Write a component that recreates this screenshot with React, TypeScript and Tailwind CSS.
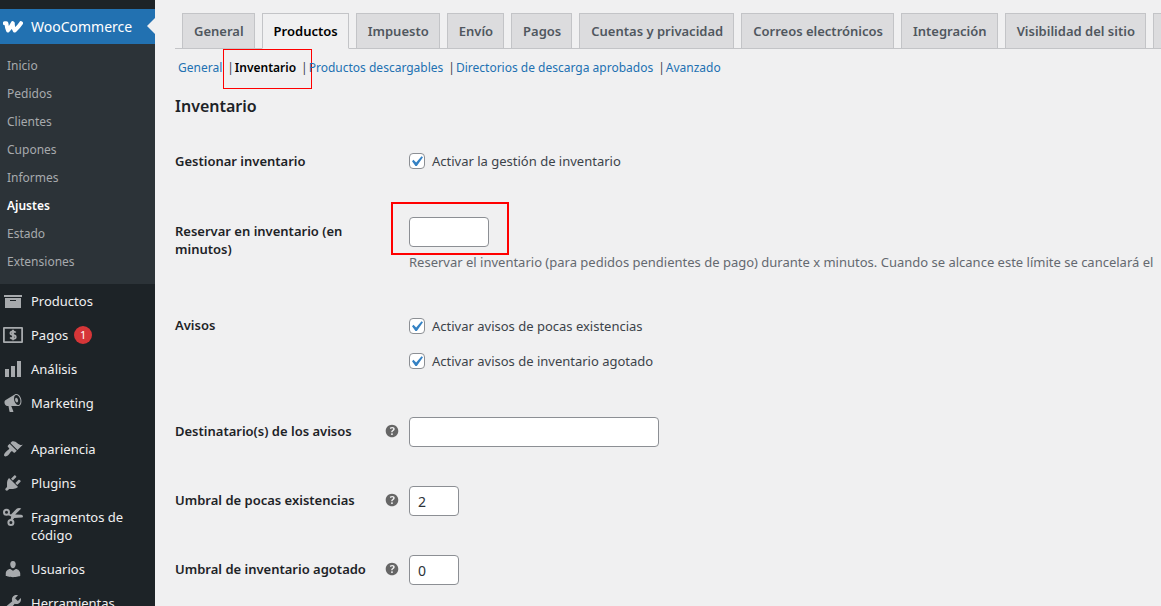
import React from "react";

type IconProps = {
	className?: string;
	children: React.ReactNode;
};

const Icon = ({ className = "size-5", children }: IconProps) => (
	<svg viewBox="0 0 20 20" fill="currentColor" aria-hidden="true" className={`shrink-0 ${className}`}>
		{children}
	</svg>
);

const icons = {
	archive: <path d="M19 4v2H1V4h18zM2 7h16v10H2V7zm11 3V9H7v1h6z" />,
	payments: (
		<>
			<path fillRule="evenodd" d="M1 2h18a1 1 0 0 1 1 1v14a1 1 0 0 1-1 1H1a1 1 0 0 1-1-1V3a1 1 0 0 1 1-1zm.8 1.800v12.400h16.400V3.800z" />
			<path
				d="M12.600 7.600c-.6-.9-1.500-1.200-2.600-1.200-1.500 0-2.500.7-2.500 1.800 0 2.500 5.200 1.100 5.200 3.700 0 1.100-1.100 1.800-2.600 1.800-1.200 0-2.200-.4-2.800-1.300M10 4.800v10.400"
				fill="none"
				stroke="currentColor"
				strokeWidth="1.900"
			/>
		</>
	),
	chart: <path d="M18 18V2h-4v16h4zm-6 0V7H8v11h4zm-6 0v-8H2v8h4z" />,
	megaphone: (
		<path d="M18.15 5.94c.46 1.62.38 3.22-.02 4.48-.42 1.28-1.26 2.18-2.3 2.48-.16.06-.26.06-.4.06-.06.02-.12.02-.18.02-.06.02-.14.02-.22.02h-6.8l2.22 5.5c.02.14-.06.26-.14.34-.08.1-.24.16-.34.16H6.95c-.1 0-.26-.06-.34-.16-.08-.08-.16-.2-.14-.34l-1-5.5H4.25l-.02-.02c-.5.06-1.08-.18-1.54-.62s-.88-1.08-1.06-1.88c-.24-.8-.2-1.56-.02-2.2.18-.62.58-1.08 1.06-1.3l.02-.02 9-5.4c.1-.06.18-.1.24-.16.06-.04.14-.08.24-.12.16-.08.28-.12.5-.18 1.04-.3 2.24.1 3.22.98s1.84 2.24 2.26 3.86zm-2.58 5.98h-.02c.4-.1.74-.34 1.04-.7.58-.7.86-1.76.86-3.04 0-.64-.1-1.3-.28-1.98-.34-1.36-1.02-2.5-1.78-3.24s-1.68-1.1-2.46-.88c-.82.22-1.4.96-1.7 2-.32 1.04-.28 2.36.06 3.72.38 1.36 1 2.5 1.8 3.24.78.74 1.62 1.1 2.48.88zm-2.54-7.08c.22-.04.42-.02.62.04.38.16.76.48 1.02 1s.42 1.2.42 1.78c0 .3-.04.56-.12.8-.18.48-.44.84-.86.94-.34.1-.8-.06-1.14-.4s-.64-.86-.78-1.5c-.18-.62-.12-1.24.02-1.72s.48-.84.82-.94z" />
	),
	brush: (
		<path d="M14.48 11.06L7.41 3.99l1.5-1.5c.5-.56 2.3-.47 3.51.32 1.21.8 1.43 1.28 2.91 2.1 1.18.64 2.45 1.26 4.45.85zm-.71.71L6.7 4.7 4.93 6.47c-.39.39-.39 1.02 0 1.41l1.06 1.06c.39.39.39 1.03 0 1.42-.6.6-1.43 1.11-2.21 1.69-.35.26-.7.53-1.01.84C1.43 14.23.4 16.08 1.4 17.07c.99 1 2.84-.03 4.18-1.36.31-.31.58-.66.85-1.02.57-.78 1.08-1.61 1.69-2.21.39-.39 1.02-.39 1.41 0l1.06 1.06c.39.39 1.02.39 1.41 0z" />
	),
	plug: (
		<path d="M13.11 4.36L9.87 7.6 8 5.73l3.24-3.24c.35-.34 1.05-.2 1.56.32.52.51.66 1.21.31 1.55zm-8 1.77l.91-1.12 9.01 9.01-1.19.84c-.71.71-2.63 1.16-3.82 1.16H6.14L4.9 17.26c-.59.59-1.54.59-2.12 0-.59-.58-.59-1.53 0-2.12l1.24-1.24v-3.88c0-1.13.4-3.19 1.09-3.89zm7.26 3.97l3.24-3.24c.34-.35 1.04-.21 1.55.31.52.51.66 1.21.31 1.55l-3.24 3.25z" />
	),
	scissors: (
		<>
			<g fill="none" stroke="currentColor" strokeWidth="2">
				<circle cx="3.500" cy="5.200" r="2.500" />
				<circle cx="7.900" cy="15.400" r="2.500" />
			</g>
			<path d="M5.200 6.200 8 7.500 13.600 1.700c1-1 3.500-1 4.700-.3L12.200 7.500l6 .2c1 .1 1.800.9 1.800 1.900 0 .6-.4.900-1 .9l-7.700.5-2.100 2.800-1.800-.9.800-3.400-3.800-1.700z" />
		</>
	),
	user: (
		<path d="M10 9.25c-2.27 0-2.73-3.44-2.73-3.44C7 4.02 7.82 2 9.97 2c2.16 0 2.98 2.02 2.71 3.81 0 0-.41 3.44-2.68 3.44zm0 2.57L12.72 10c2.39 0 4.52 2.33 4.52 4.53v2.49s-3.65 1.13-7.24 1.13c-3.65 0-7.24-1.13-7.24-1.13v-2.49c0-2.25 1.94-4.48 4.47-4.48z" />
	),
	wrench: (
		<path d="M16.68 9.77c-1.34 1.34-3.3 1.67-4.95.99l-5.41 6.52c-.99.99-2.59.99-3.58 0s-.99-2.59 0-3.57l6.52-5.42c-.68-1.65-.35-3.61.99-4.95 1.28-1.28 3.12-1.62 4.72-1.06l-2.89 2.89 2.82 2.82 2.86-2.87c.53 1.58.18 3.39-1.08 4.65zM3.81 16.21c.4.39 1.04.39 1.43 0 .4-.4.4-1.04 0-1.43-.39-.4-1.03-.4-1.43 0-.39.39-.39 1.03 0 1.43z" />
	),
	help: (
		<path d="M17 10c0-3.87-3.14-7-7-7-3.87 0-7 3.13-7 7s3.13 7 7 7c3.86 0 7-3.13 7-7zm-6.3 1.48H9.14v-.43c0-.38.08-.7.24-.98s.46-.57.88-.89c.41-.29.68-.53.81-.71.14-.18.2-.39.2-.62 0-.25-.09-.44-.28-.58-.19-.13-.45-.19-.79-.19-.58 0-1.25.19-2 .57l-.64-1.28c.87-.49 1.8-.74 2.77-.74.81 0 1.45.2 1.92.58.48.39.71.91.71 1.55 0 .43-.09.8-.29 1.11-.19.32-.57.67-1.11 1.06-.38.28-.61.49-.71.63-.1.15-.15.34-.15.57v.35zm-1.47 2.74c-.18-.17-.27-.42-.27-.73 0-.33.08-.58.26-.75s.43-.25.77-.25c.32 0 .57.09.75.26s.27.42.27.74c0 .3-.09.55-.27.72-.18.18-.43.27-.75.27-.33 0-.58-.09-.76-.26z" />
	),
};

const submenu = ["Inicio", "Pedidos", "Clientes", "Cupones", "Informes", "Ajustes", "Estado", "Extensiones"];

const storeMenu = [
	{ label: "Productos", icon: icons.archive },
	{ label: "Pagos", icon: icons.payments, count: 1 },
	{ label: "Análisis", icon: icons.chart },
	{ label: "Marketing", icon: icons.megaphone },
];

const siteMenu = [
	{ label: "Apariencia", icon: icons.brush },
	{ label: "Plugins", icon: icons.plug },
	{ label: "Fragmentos de código", icon: icons.scissors },
	{ label: "Usuarios", icon: icons.user },
	{ label: "Herramientas", icon: icons.wrench },
];

const tabs = [
	"General",
	"Productos",
	"Impuesto",
	"Envío",
	"Pagos",
	"Cuentas y privacidad",
	"Correos electrónicos",
	"Integración",
	"Visibilidad del sitio",
];

const sections = ["General", "Inventario", "Productos descargables", "Directorios de descarga aprobados", "Avanzado"];

type MenuItemProps = {
	label: string;
	icon: React.ReactNode;
	count?: number;
};

const MenuItem = ({ label, icon, count }: MenuItemProps) => (
	<li>
		<a href="#" className="flex gap-2 py-2 pl-[3px] pr-5 text-[13px] leading-[18px] text-[#f0f0f1]">
			<Icon className="-my-px size-5 text-[#a7aaad]">{icon}</Icon>
			<span>{label}</span>
			{count && (
				<span className="-ml-[2px] flex size-[18px] items-center justify-center rounded-full bg-[#d63638] text-[11px] text-white">
					{count}
				</span>
			)}
		</a>
	</li>
);

const Sidebar = () => (
	<nav className="w-[155px] shrink-0 bg-[#1d2327] pt-[9px]">
		<a href="#" className="relative flex h-[35px] items-center gap-2 bg-[#2271b1] pl-[3px] text-sm text-white">
			<svg viewBox="0 0 20 12" className="h-3 w-5 shrink-0" fill="none" stroke="currentColor" aria-hidden="true">
				<path
					d="M1.800 2.200h1.600c.3 3 .6 5.200 1.600 7.200C7.100 7.400 8.500 4.800 9.800 2.200c-.2 3 .3 5.200 1.900 7.200C13.900 7.400 16.300 5 18 2.200"
					strokeWidth="4"
					strokeLinecap="round"
					strokeLinejoin="round"
				/>
			</svg>
			WooCommerce
			<span className="absolute right-0 top-[9px] border-y-8 border-r-8 border-y-transparent border-r-[#f0f0f1]" />
		</a>
		<ul className="bg-[#2c3338] py-2">
			{submenu.map((item) => (
				<li key={item}>
					<a
						href="#"
						className={
							item === "Ajustes"
								? "block px-[7px] py-[5px] text-xs font-semibold leading-[18px] text-white"
								: "block px-[7px] py-[5px] text-xs leading-[18px] text-[#a7aaad]"
						}
					>
						{item}
					</a>
				</li>
			))}
		</ul>
		<ul>
			{storeMenu.map((item) => (
				<MenuItem key={item.label} {...item} />
			))}
		</ul>
		<ul className="mt-3">
			{siteMenu.map((item) => (
				<MenuItem key={item.label} {...item} />
			))}
		</ul>
	</nav>
);

type CheckboxProps = {
	id: string;
	label: string;
};

const Checkbox = ({ id, label }: CheckboxProps) => (
	<label htmlFor={id} className="flex items-center gap-[7px] leading-5">
		<span className="grid size-4 shrink-0">
			<input
				id={id}
				type="checkbox"
				defaultChecked
				className="peer col-start-1 row-start-1 size-4 appearance-none rounded border border-[#8c8f94] bg-white"
			/>
			<svg
				viewBox="2.9 1.9 15.2 15.2"
				aria-hidden="true"
				className="pointer-events-none invisible col-start-1 row-start-1 size-4 fill-[#3582c4] peer-checked:visible"
			>
				<path d="M14.83 4.89l1.34.94-5.81 8.38H9.02L5.78 9.67l1.34-1.25 2.57 2.4z" />
			</svg>
		</span>
		{label}
	</label>
);

type FieldRowProps = {
	label: string;
	htmlFor?: string;
	help?: boolean;
	children: React.ReactNode;
};

const FieldRow = ({ label, htmlFor, help, children }: FieldRowProps) => (
	<div className="grid grid-cols-[234px_1fr]">
		<div className="flex justify-between pr-2 pt-5 font-semibold leading-[18px] text-[#1d2327]">
			<label htmlFor={htmlFor} className="w-48 whitespace-normal">
				{label}
			</label>
			{help && (
				<button type="button" aria-label="Ayuda" className="size-[18px] text-[#666]">
					<Icon className="size-[18px]">{icons.help}</Icon>
				</button>
			)}
		</div>
		<div className="pb-6 pt-[15px]">{children}</div>
	</div>
);

const inputStyle = "block h-[30px] rounded border border-[#8c8f94] bg-white px-2 text-sm text-[#2c3338]";

const App = () => {
	return (
		<div className="flex h-screen overflow-hidden bg-[#f0f0f1] font-['Noto_Sans',sans-serif] text-[13px] text-[#3c434a]">
			<Sidebar />
			<main className="min-w-0 flex-1 overflow-hidden whitespace-nowrap pl-5 pt-[13px]">
				<nav className="flex gap-[7px] border-b border-[#c3c4c7] pl-[7px]">
					{tabs.map((tab) => (
						<a
							key={tab}
							href="#"
							className={
								tab === "Productos"
									? "-mb-px shrink-0 border border-b-[#f0f0f1] border-[#c3c4c7] bg-[#f0f0f1] py-[5px] pl-[11px] pr-[10px] font-semibold leading-6 text-black"
									: "shrink-0 border border-b-0 border-[#c3c4c7] bg-[#dcdcde] py-[5px] pl-[11px] pr-[10px] font-semibold leading-6 text-[#50575e]"
							}
						>
							{tab}
						</a>
					))}
					<a
						href="#"
						aria-label="Más ajustes"
						className="w-20 shrink-0 border border-b-0 border-[#c3c4c7] bg-[#dcdcde]"
					/>
				</nav>

				<ul className="flex gap-[5px] pl-[3px] pt-[10px] text-xs leading-[18px]">
					{sections.map((section, i) => (
						<li key={section} className="relative flex gap-px">
							{i > 0 && <span>|</span>}
							<a href="#" className={section === "Inventario" ? "font-semibold text-black" : "text-[#2271b1]"}>
								{section}
							</a>
							{section === "Inventario" && (
								<span className="pointer-events-none absolute -bottom-3 -left-1 -right-4 -top-[10px] border border-[#f00]" />
							)}
						</li>
					))}
				</ul>

				<form>
					<h2 className="pb-[14px] pt-[17px] text-base font-semibold leading-6 text-[#1d2327]">Inventario</h2>

					<FieldRow label="Gestionar inventario" htmlFor="manage">
						<div className="pb-[7px] pt-1">
							<Checkbox id="manage" label="Activar la gestión de inventario" />
						</div>
					</FieldRow>

					<FieldRow label="Reservar en inventario (en minutos)" htmlFor="hold">
						<div className="relative w-20">
							<input id="hold" type="text" className={`${inputStyle} w-20`} />
							<span className="pointer-events-none absolute -bottom-2 -left-[18px] -right-5 -top-[15px] border-2 border-[#f00]" />
						</div>
						<p className="pt-[5px] leading-5 text-[#646970]">
							Reservar el inventario (para pedidos pendientes de pago) durante x minutos. Cuando se alcance este límite se cancelará el
						</p>
					</FieldRow>

					<FieldRow label="Avisos">
						<div className="flex flex-col gap-[15px] pb-[7px] pt-[5px]">
							<Checkbox id="low" label="Activar avisos de pocas existencias" />
							<Checkbox id="out" label="Activar avisos de inventario agotado" />
						</div>
					</FieldRow>

					<FieldRow label="Destinatario(s) de los avisos" htmlFor="recipients" help>
						<input id="recipients" type="text" className={`${inputStyle} w-[250px]`} />
					</FieldRow>

					<FieldRow label="Umbral de pocas existencias" htmlFor="low-threshold" help>
						<input id="low-threshold" type="text" defaultValue="2" className={`${inputStyle} w-[50px]`} />
					</FieldRow>

					<FieldRow label="Umbral de inventario agotado" htmlFor="out-threshold" help>
						<input id="out-threshold" type="text" defaultValue="0" className={`${inputStyle} w-[50px]`} />
					</FieldRow>
				</form>
			</main>
		</div>
	);
};

export default App;
